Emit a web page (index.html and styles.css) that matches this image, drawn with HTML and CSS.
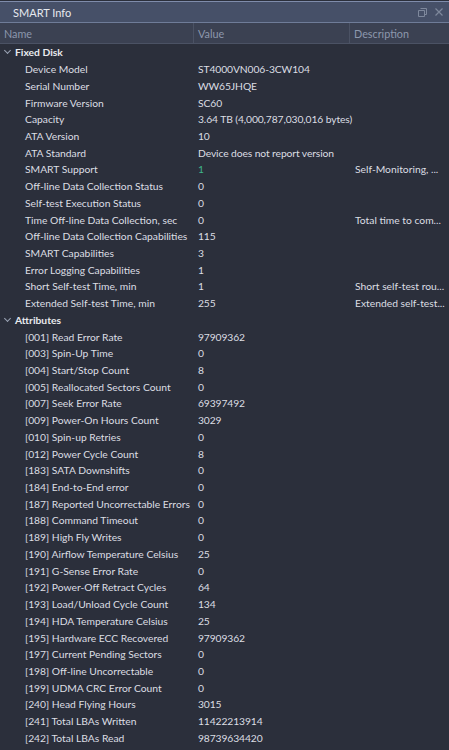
FILE: index.html
```html
<!DOCTYPE html>
<html lang="en">
<head>
  <meta charset="UTF-8">
  <title>SMART Info</title>
  <link rel="stylesheet" href="styles.css">
</head>
<body>
  <div class="panel">
    <div class="titlebar">
      <span class="title">SMART Info</span>
      <span class="tools">
        <svg width="9" height="9" viewBox="0 0 9 9"><path d="M2.5 0.5h6v6h-2M0.5 2.5h6v6h-6z" fill="none" stroke="#7e889c"/></svg>
        <svg width="8" height="8" viewBox="0 0 8 8"><path d="M0.5 0.5l7 7M7.5 0.5l-7 7" stroke="#7e889c" stroke-width="1.2"/></svg>
      </span>
    </div>
    <div class="header">
      <div class="col name">Name</div>
      <div class="col value">Value</div>
      <div class="col desc">Description</div>
    </div>

    <div class="group"><span class="chev"></span>Fixed Disk</div>
    <div class="row"><span class="name">Device Model</span><span class="value">ST4000VN006-3CW104</span><span class="desc"></span></div>
    <div class="row"><span class="name">Serial Number</span><span class="value">WW65JHQE</span><span class="desc"></span></div>
    <div class="row"><span class="name">Firmware Version</span><span class="value">SC60</span><span class="desc"></span></div>
    <div class="row"><span class="name">Capacity</span><span class="value">3.64 TB (4,000,787,030,016 bytes)</span><span class="desc"></span></div>
    <div class="row"><span class="name">ATA Version</span><span class="value">10</span><span class="desc"></span></div>
    <div class="row"><span class="name">ATA Standard</span><span class="value">Device does not report version</span><span class="desc"></span></div>
    <div class="row"><span class="name">SMART Support</span><span class="value ok">1</span><span class="desc">Self-Monitoring, ...</span></div>
    <div class="row"><span class="name">Off-line Data Collection Status</span><span class="value">0</span><span class="desc"></span></div>
    <div class="row"><span class="name">Self-test Execution Status</span><span class="value">0</span><span class="desc"></span></div>
    <div class="row"><span class="name">Time Off-line Data Collection, sec</span><span class="value">0</span><span class="desc">Total time to com...</span></div>
    <div class="row"><span class="name">Off-line Data Collection Capabilities</span><span class="value">115</span><span class="desc"></span></div>
    <div class="row"><span class="name">SMART Capabilities</span><span class="value">3</span><span class="desc"></span></div>
    <div class="row"><span class="name">Error Logging Capabilities</span><span class="value">1</span><span class="desc"></span></div>
    <div class="row"><span class="name">Short Self-test Time, min</span><span class="value">1</span><span class="desc">Short self-test rou...</span></div>
    <div class="row"><span class="name">Extended Self-test Time, min</span><span class="value">255</span><span class="desc">Extended self-test...</span></div>

    <div class="group"><span class="chev"></span>Attributes</div>
    <div class="row"><span class="name">[001] Read Error Rate</span><span class="value">97909362</span><span class="desc"></span></div>
    <div class="row"><span class="name">[003] Spin-Up Time</span><span class="value">0</span><span class="desc"></span></div>
    <div class="row"><span class="name">[004] Start/Stop Count</span><span class="value">8</span><span class="desc"></span></div>
    <div class="row"><span class="name">[005] Reallocated Sectors Count</span><span class="value">0</span><span class="desc"></span></div>
    <div class="row"><span class="name">[007] Seek Error Rate</span><span class="value">69397492</span><span class="desc"></span></div>
    <div class="row"><span class="name">[009] Power-On Hours Count</span><span class="value">3029</span><span class="desc"></span></div>
    <div class="row"><span class="name">[010] Spin-up Retries</span><span class="value">0</span><span class="desc"></span></div>
    <div class="row"><span class="name">[012] Power Cycle Count</span><span class="value">8</span><span class="desc"></span></div>
    <div class="row"><span class="name">[183] SATA Downshifts</span><span class="value">0</span><span class="desc"></span></div>
    <div class="row"><span class="name">[184] End-to-End error</span><span class="value">0</span><span class="desc"></span></div>
    <div class="row"><span class="name">[187] Reported Uncorrectable Errors</span><span class="value">0</span><span class="desc"></span></div>
    <div class="row"><span class="name">[188] Command Timeout</span><span class="value">0</span><span class="desc"></span></div>
    <div class="row"><span class="name">[189] High Fly Writes</span><span class="value">0</span><span class="desc"></span></div>
    <div class="row"><span class="name">[190] Airflow Temperature Celsius</span><span class="value">25</span><span class="desc"></span></div>
    <div class="row"><span class="name">[191] G-Sense Error Rate</span><span class="value">0</span><span class="desc"></span></div>
    <div class="row"><span class="name">[192] Power-Off Retract Cycles</span><span class="value">64</span><span class="desc"></span></div>
    <div class="row"><span class="name">[193] Load/Unload Cycle Count</span><span class="value">134</span><span class="desc"></span></div>
    <div class="row"><span class="name">[194] HDA Temperature Celsius</span><span class="value">25</span><span class="desc"></span></div>
    <div class="row"><span class="name">[195] Hardware ECC Recovered</span><span class="value">97909362</span><span class="desc"></span></div>
    <div class="row"><span class="name">[197] Current Pending Sectors</span><span class="value">0</span><span class="desc"></span></div>
    <div class="row"><span class="name">[198] Off-line Uncorrectable</span><span class="value">0</span><span class="desc"></span></div>
    <div class="row"><span class="name">[199] UDMA CRC Error Count</span><span class="value">0</span><span class="desc"></span></div>
    <div class="row"><span class="name">[240] Head Flying Hours</span><span class="value">3015</span><span class="desc"></span></div>
    <div class="row"><span class="name">[241] Total LBAs Written</span><span class="value">11422213914</span><span class="desc"></span></div>
    <div class="row"><span class="name">[242] Total LBAs Read</span><span class="value">98739634420</span><span class="desc"></span></div>
  </div>
</body>
</html>
```

FILE: styles.css
```css
html, body {
  margin: 0;
  height: 100%;
  background-color: #2b2f3b;
  overflow: hidden;
}
body {
  font-family: Lato, "Noto Sans", sans-serif;
  font-size: 10.3px;
  color: #dcdee3;
}
.panel {
  border-top: 1px solid #2b2f3b;
}
.titlebar {
  display: flex;
  align-items: center;
  justify-content: space-between;
  height: 20px;
  border-top: 1px solid #7f8cab;
  border-bottom: 1px solid #6f7c98;
  background-color: #465068;
  padding: 0 6px 0 13px;
  color: #e6e9ef;
  font-size: 11px;
}
.tools {
  display: flex;
  align-items: center;
  gap: 8px;
}
.tools svg {
  display: block;
}
.header {
  display: grid;
  grid-template-columns: 194px 156px 1fr;
  height: 20px;
  background-color: #3b4152;
  border-bottom: 1px solid #4b5264;
  color: #8d98ad;
  font-size: 10.8px;
}
.header .col {
  display: flex;
  align-items: center;
  padding-left: 4px;
  border-right: 1px solid #4b5264;
}
.header .desc {
  border-right: none;
}
.group {
  display: flex;
  align-items: center;
  height: 16.73px;
  padding-left: 4px;
  font-weight: 700;
  color: #e8eaee;
}
.chev {
  width: 4px;
  height: 4px;
  border-right: 1px solid #9aa3b4;
  border-bottom: 1px solid #9aa3b4;
  transform: rotate(45deg);
  margin: -3px 5px 0 1px;
}
.row {
  display: grid;
  grid-template-columns: 194px 156px 1fr;
  align-items: center;
  height: 16.73px;
  white-space: nowrap;
}
.row .name {
  padding-left: 25px;
  overflow: hidden;
}
.row .value {
  padding-left: 4px;
  letter-spacing: -0.1px;
}
.row .desc {
  padding-left: 5px;
  overflow: hidden;
}
.value.ok {
  color: #3fb58a;
}
```
